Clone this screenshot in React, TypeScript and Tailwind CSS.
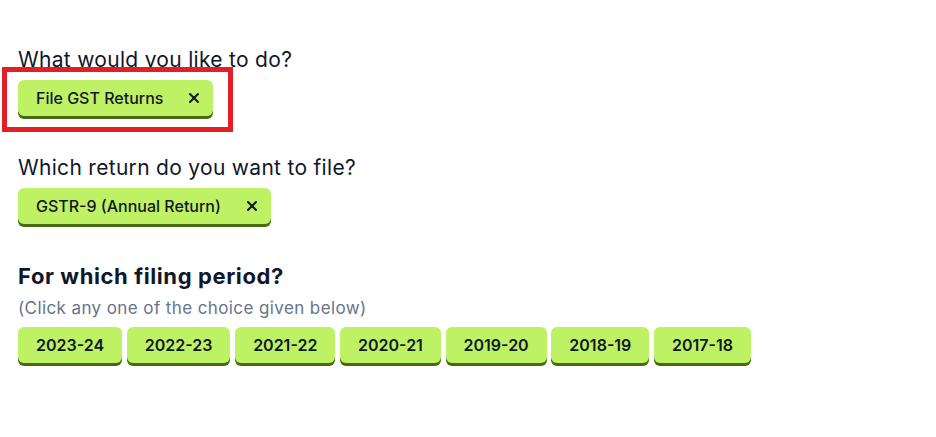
import React from 'react';
import { X } from 'lucide-react';

const years = ['2023-24', '2022-23', '2021-22', '2020-21', '2019-20', '2018-19', '2017-18'];

const chip =
  'flex h-9 items-center rounded-md bg-[#bef264] text-base text-[#111827] shadow-[0_3px_0_#466b12]';

const Selected: React.FC<{ label: string; highlight?: boolean }> = ({ label, highlight }) => (
  <div className="relative mt-1.5 flex">
    <button className={`${chip} pl-[18px] pr-[11px] font-medium`}>
      <span>{label}</span>
      <X className="ml-[23px]" size={16} strokeWidth={3} />
    </button>
    {highlight && (
      <div className="pointer-events-none absolute -top-[13px] -left-[16px] h-[65px] w-[231px] border-[5px] border-[#e31e24]" />
    )}
  </div>
);

export default function App() {
  return (
    <div
      className="min-h-screen bg-white px-[18px] pt-[46px] text-[#0f172a]"
      style={{ fontFamily: 'Inter, "Noto Sans", sans-serif' }}
    >
      <section>
        <h2 className="text-[21px] leading-7 tracking-[0.3px]">What would you like to do?</h2>
        <Selected label="File GST Returns" highlight />
      </section>

      <section className="mt-[38px]">
        <h2 className="text-[21px] leading-7 tracking-[0.3px]">Which return do you want to file?</h2>
        <Selected label="GSTR-9 (Annual Return)" />
      </section>

      <section className="mt-[38px]">
        <h2 className="text-[22px] font-bold leading-7 tracking-[0.6px]">For which filing period?</h2>
        <p className="mt-1.5 text-[17px] leading-6 tracking-[0.4px] text-[#64748b]">
          (Click any one of the choice given below)
        </p>
        <div className="mt-[7px] flex gap-[4.7px]">
          {years.map((y) => (
            <button key={y} className={`${chip} px-[18px] font-semibold`}>
              {y}
            </button>
          ))}
        </div>
      </section>
    </div>
  );
}
